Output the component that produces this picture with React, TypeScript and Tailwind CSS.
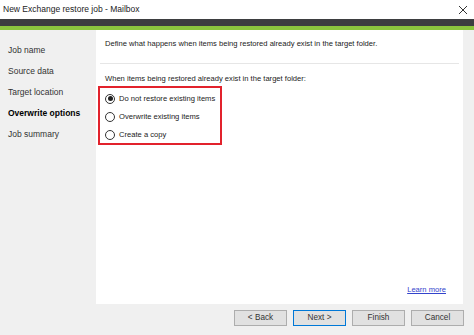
import React from "react";

const steps = ["Job name", "Source data", "Target location", "Overwrite options", "Job summary"];
const options = ["Do not restore existing items", "Overwrite existing items", "Create a copy"];

function Radio({ checked }: { checked?: boolean }) {
  return (
    <span className="w-[10px] h-[10px] rounded-full border border-[#333] bg-white flex items-center justify-center shrink-0">
      {checked && <span className="w-[5px] h-[5px] rounded-full bg-[#222]" />}
    </span>
  );
}

export default function App() {
  return (
    <div
      className="w-[474px] h-[335px] flex flex-col bg-[#f0f0f0] text-[#1a1a1a] overflow-hidden"
      style={{ fontFamily: '"Liberation Sans", Arial, sans-serif' }}
    >
      {/* title bar */}
      <div className="h-[19px] bg-white flex items-center justify-between pl-[3px] pr-[6px] shrink-0">
        <span className="text-[8.5px] leading-none text-[#222]">New Exchange restore job - Mailbox</span>
        <svg width="10" height="10" viewBox="0 0 10 10" className="text-[#333]">
          <path d="M1 1 L9 9 M9 1 L1 9" stroke="currentColor" strokeWidth="1" />
        </svg>
      </div>
      <div className="h-[7px] bg-[#3d3e40] shrink-0" />
      <div className="h-[4px] bg-[#8cc63e] shrink-0" />

      <div className="flex flex-1 min-h-0">
        {/* sidebar */}
        <div className="w-[96px] pt-[15px] pl-[8px] flex flex-col gap-[10px] shrink-0">
          {steps.map((s) => (
            <div
              key={s}
              className={`text-[8.5px] leading-[11px] ${s === "Overwrite options" ? "font-bold text-black" : "text-[#333]"}`}
            >
              {s}
            </div>
          ))}
        </div>

        {/* content */}
        <div className="w-[367px] bg-white flex flex-col">
          <div className="px-[9px] pt-[8px] text-[7.6px] leading-[11px] text-[#222] whitespace-nowrap">
            Define what happens when items being restored already exist in the target folder.
          </div>
          <div className="mx-[4px] mt-[14px] h-px bg-[#e6e6e6]" />
          <div className="px-[9px] pt-[9px] text-[7.6px] leading-[11px] text-[#222] whitespace-nowrap">
            When items being restored already exist in the target folder:
          </div>
          <div className="ml-[2px] mt-[2px] w-[124px] border-2 border-[#e2222c] pt-[5px] pb-[3px] pl-[5px] flex flex-col gap-[7px]">
            {options.map((o, i) => (
              <label
                key={o}
                className="h-[11px] flex items-center gap-[4px] text-[7.6px] leading-[11px] text-[#222] whitespace-nowrap"
              >
                <Radio checked={i === 0} />
                {o}
              </label>
            ))}
          </div>
          <div className="flex-1" />
          <div className="flex justify-end pr-[17px] pb-[10px]">
            <span className="text-[7.6px] leading-none text-[#3344cc] underline">Learn more</span>
          </div>
        </div>
        <div className="flex-1" />
      </div>

      {/* footer */}
      <div className="h-[31px] flex items-start justify-end gap-[6px] pt-[6px] pr-[10px] shrink-0">
        {["< Back", "Next >", "Finish", "Cancel"].map((b) => (
          <button
            key={b}
            className={`w-[53px] h-[16px] text-[8.2px] leading-none bg-[#e1e1e1] border text-[#333] ${
              b === "Next >" ? "border-[#0078d7] border-[1.5px]" : "border-[#adadad]"
            }`}
          >
            {b}
          </button>
        ))}
      </div>
    </div>
  );
}
